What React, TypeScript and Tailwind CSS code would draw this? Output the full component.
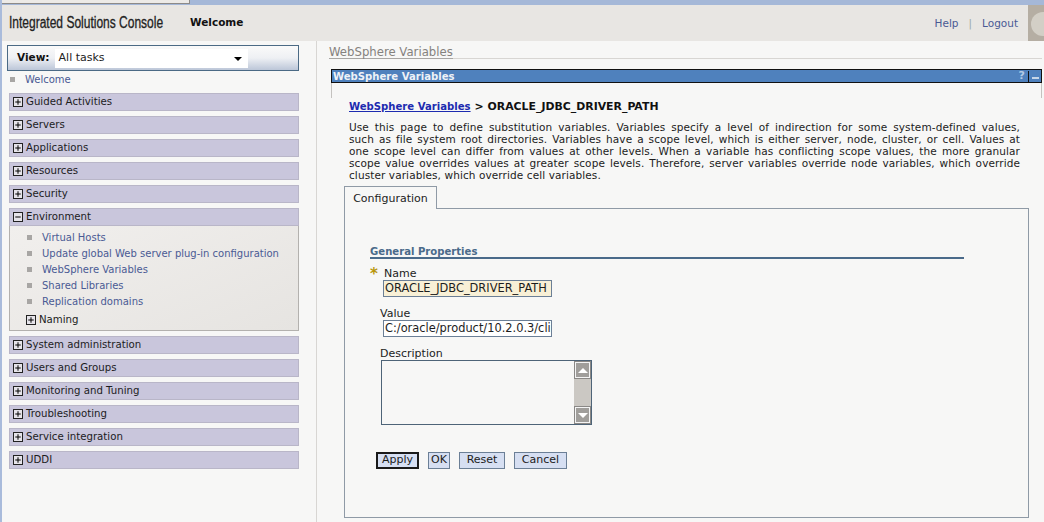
import { Minus, Plus } from "lucide-react";

const font = "font-['DejaVu_Sans',sans-serif]";

function Toggle({ open }: { open?: boolean }) {
  const Icon = open ? Minus : Plus;
  return (
    <span className="flex h-[10px] w-[10px] shrink-0 items-center justify-center border border-[#222] bg-[#e6e4ea]">
      <Icon className="h-[8px] w-[8px] text-black" strokeWidth={3} />
    </span>
  );
}

function NavBar({ label, open }: { label: string; open?: boolean }) {
  return (
    <div className="flex h-[18px] items-center gap-[3px] border border-[#b9b6c8] bg-[#c9c6dc] pl-[3px] text-[#1c1c1c]">
      <Toggle open={open} />
      <span>{label}</span>
    </div>
  );
}

function SubLink({ label }: { label: string }) {
  return (
    <div className="flex h-[16px] items-center">
      <span className="ml-[17px] h-[5px] w-[5px] bg-[#a8a6a4]" />
      <span className="ml-[10px] text-[10px] text-[#4a5a94]">{label}</span>
    </div>
  );
}

const before = ["Guided Activities", "Servers", "Applications", "Resources", "Security"];
const after = [
  "System administration",
  "Users and Groups",
  "Monitoring and Tuning",
  "Troubleshooting",
  "Service integration",
  "UDDI",
];
const envLinks = [
  "Virtual Hosts",
  "Update global Web server plug-in configuration",
  "WebSphere Variables",
  "Shared Libraries",
  "Replication domains",
];

function Sidebar() {
  return (
    <aside className="w-[315px] shrink-0 border-r border-[#d8d6d3] pt-[4px] pl-[5px] pr-[17px] text-[10.2px]">
      <div className="flex h-[26px] items-center border border-[#4b6a85] bg-gradient-to-b from-[#fafafa] via-[#eef0f4] to-[#bcc6d8] pl-[9px]">
        <span className="text-[10.5px] font-bold text-[#111]">View:</span>
        <div className="ml-[5px] flex h-[19px] w-[193px] items-center justify-between bg-white pl-[4px] pr-[6px] text-[11px] text-[#222]">
          <span>All tasks</span>
          <span className="mt-[2px] h-0 w-0 border-x-[4px] border-t-[4px] border-x-transparent border-t-black" />
        </div>
      </div>
      <div className="ml-[2px]">
        <div className="flex h-[18px] items-center pb-[2px]">
          <span className="ml-[1px] h-[5px] w-[5px] bg-[#a8a6a4]" />
          <span className="ml-[10px] text-[10px] text-[#4a5a94]">Welcome</span>
        </div>
        <div className="mt-[4px] flex flex-col gap-[5px]">
          {before.map((b) => (
            <NavBar key={b} label={b} />
          ))}
          <div className="border border-[#b3b1ae] border-t-0 bg-gradient-to-br from-[#f2f0ee] to-[#e6e4e1]">
            <div className="-mx-px">
              <NavBar label="Environment" open />
            </div>
            <div className="pt-[3px]">
              {envLinks.map((l) => (
                <SubLink key={l} label={l} />
              ))}
              <div className="flex h-[21px] items-center gap-[3px] pl-[16px] text-[#1c1c1c]">
                <Toggle />
                <span>Naming</span>
              </div>
            </div>
          </div>
          {after.map((b) => (
            <NavBar key={b} label={b} />
          ))}
        </div>
      </div>
    </aside>
  );
}

function Field({ label, value, tint, required }: { label: string; value: string; tint?: boolean; required?: boolean }) {
  return (
    <div>
      <div className="flex h-[13px] items-center text-[11px] leading-none">
        {required && <span className="mr-[6px] mt-[2px] w-[8px] text-[15px] font-bold text-[#b8960c]">*</span>}
        <span className={required ? "" : "ml-[10px]"}>{label}</span>
      </div>
      <div
        className={`ml-[13px] h-[17px] w-[169px] overflow-hidden whitespace-nowrap border border-[#6b7f96] pl-[1px] text-[11.4px] leading-[15px] ${
          tint ? "bg-[#f8f0d6]" : "bg-white"
        }`}
      >
        {value}
      </div>
    </div>
  );
}

function Btn({ label, w, active }: { label: string; w: string; active?: boolean }) {
  return (
    <span
      className={`flex h-[17px] items-center justify-center bg-[#d6dff2] text-[11px] ${w} ${
        active ? "border-2 border-[#1a1a1a]" : "border border-[#6b7f96]"
      }`}
    >
      {label}
    </span>
  );
}

function ScrollBtn({ up }: { up?: boolean }) {
  return (
    <span className="flex h-[16px] w-[15px] items-center justify-center border border-[#f4f4f4] bg-[#a09e9b] outline outline-1 outline-[#8a8886]">
      <span
        className={`h-0 w-0 border-x-[5px] border-x-transparent ${
          up ? "border-b-[5px] border-b-white" : "border-t-[5px] border-t-white"
        }`}
      />
    </span>
  );
}

function Main() {
  return (
    <main className="min-w-0 flex-1 pl-[12px] pr-[2px] text-[10.5px] text-[#1c1c1c]">
      <div className="mt-[5px] h-[13px] border-b border-[#d8d6d3] text-[11.7px] leading-[13px] text-[#85827e]">
        <span className="inline-block h-[13px] border-b border-[#a8a6a4]">WebSphere Variables</span>
      </div>
      <div className="ml-[2px] mt-[10px]">
        <div className="flex h-[14px] items-center justify-between border border-[#111] bg-[#4f81bd] pl-[1px] pt-px text-[10.1px] font-bold text-[#eef2f7]">
          <span>WebSphere Variables</span>
          <div className="-mt-px flex h-full items-center">
            <span className="pr-[3px] text-[11px] text-[#b4cbe4]">?</span>
            <span className="flex h-full w-[13px] items-center justify-center border-l border-[#111]">
              <span className="mt-[3px] h-[2px] w-[7px] bg-[#c6d6e8]" />
            </span>
          </div>
        </div>
        <div className="h-[15px] border-x border-[#c4c2bf]" />
        <div className="pl-[13px] pr-[12px]">
          <div className="ml-[5px] mt-[2px] flex items-baseline gap-[4px] font-bold leading-[14px] text-[10.9px] text-[#111]">
            <span className="text-[10.1px] text-[#1d2bb0] underline">WebSphere Variables</span>
            <span>&gt; ORACLE_JDBC_DRIVER_PATH</span>
          </div>
          <div className="ml-[5px] mt-[7px] w-[671px] text-[10.5px] leading-[12px] tracking-[0.1px]">
            <p className="[text-align-last:justify]">
              Use this page to define substitution variables. Variables specify a level of indirection for some system-defined values,
            </p>
            <p className="[text-align-last:justify]">
              such as file system root directories. Variables have a scope level, which is either server, node, cluster, or cell. Values at
            </p>
            <p className="[text-align-last:justify]">
              one scope level can differ from values at other levels. When a variable has conflicting scope values, the more granular
            </p>
            <p className="[text-align-last:justify]">
              scope value overrides values at greater scope levels. Therefore, server variables override node variables, which override
            </p>
            <p>cluster variables, which override cell variables.</p>
          </div>
          <div className="relative z-10 mt-[5px] flex h-[23px] w-[93px] items-center justify-center border border-b-0 border-[#8f9aa6] bg-[#f7f7f6] pt-[3px] text-[11px]">
            Configuration
          </div>
          <div className="-mt-px h-[310px] w-[685px] border border-[#8f9aa6] pl-[25px]">
            <div className="mt-[36px] h-[14px] w-[594px] border-b-2 border-[#4a6a8a] text-[10.1px] font-bold leading-[14px] text-[#4a6a8a]">
              General Properties
            </div>
            <div className="mt-[8px] flex flex-col gap-[4px]">
              <Field label="Name" value="ORACLE_JDBC_DRIVER_PATH" tint required />
              <div className="mt-[6px]">
                <Field label="Value" value="C:/oracle/product/10.2.0.3/cli" />
              </div>
            </div>
            <div className="ml-[10px] mt-[10px] text-[11px] leading-[13px]">Description</div>
            <div className="ml-[11px] flex h-[65px] w-[211px] justify-end border border-[#4e6478] bg-[#f7f7f6]">
              <div className="flex w-[17px] flex-col justify-between bg-[#cbc8c3] p-px pl-[1px]">
                <ScrollBtn up />
                <ScrollBtn />
              </div>
            </div>
            <div className="ml-[6px] mt-[27px] flex gap-[9px]">
              <Btn label="Apply" w="w-[43px]" active />
              <Btn label="OK" w="w-[22px]" />
              <Btn label="Reset" w="w-[46px]" />
              <Btn label="Cancel" w="w-[53px]" />
            </div>
          </div>
        </div>
      </div>
    </main>
  );
}

export default function App() {
  return (
    <div className={`flex h-[522px] w-[1044px] flex-col overflow-hidden border-l-2 border-[#a9bbdb] bg-[#f7f7f6] ${font}`}>
      <div className="flex h-[5px] shrink-0 bg-[#a5b8d8]">
        <div className="h-[4px] w-[188px] border-b border-r border-[#8c8a88] bg-[#eceae7]" />
      </div>
      <header className="flex h-[36px] shrink-0 items-center justify-between bg-[#e8e6e3]">
        <div className="flex items-center">
          <span className="ml-[7px] w-[181px] origin-left scale-x-[0.75] whitespace-nowrap font-['Liberation_Sans',sans-serif] text-[16px] text-[#222] [-webkit-text-stroke:0.3px_#222]">
            Integrated Solutions Console
          </span>
          <span className="text-[10.5px] font-bold text-[#111]">Welcome</span>
        </div>
        <div className="flex h-full items-center text-[10.5px] text-[#4a5a94]">
          <span className="pt-px">Help</span>
          <span className="mx-[10px] pt-px text-[#9aa]">|</span>
          <span className="pt-px">Logout</span>
          <div className="ml-[10px] h-full w-[16px] overflow-hidden bg-[#b5aea3]">
            <div className="ml-[3px] mt-[7px] h-[24px] w-[24px] rounded-full bg-[#d3cfc6]" />
          </div>
        </div>
      </header>
      <div className="flex min-h-0 flex-1">
        <Sidebar />
        <Main />
      </div>
    </div>
  );
}
